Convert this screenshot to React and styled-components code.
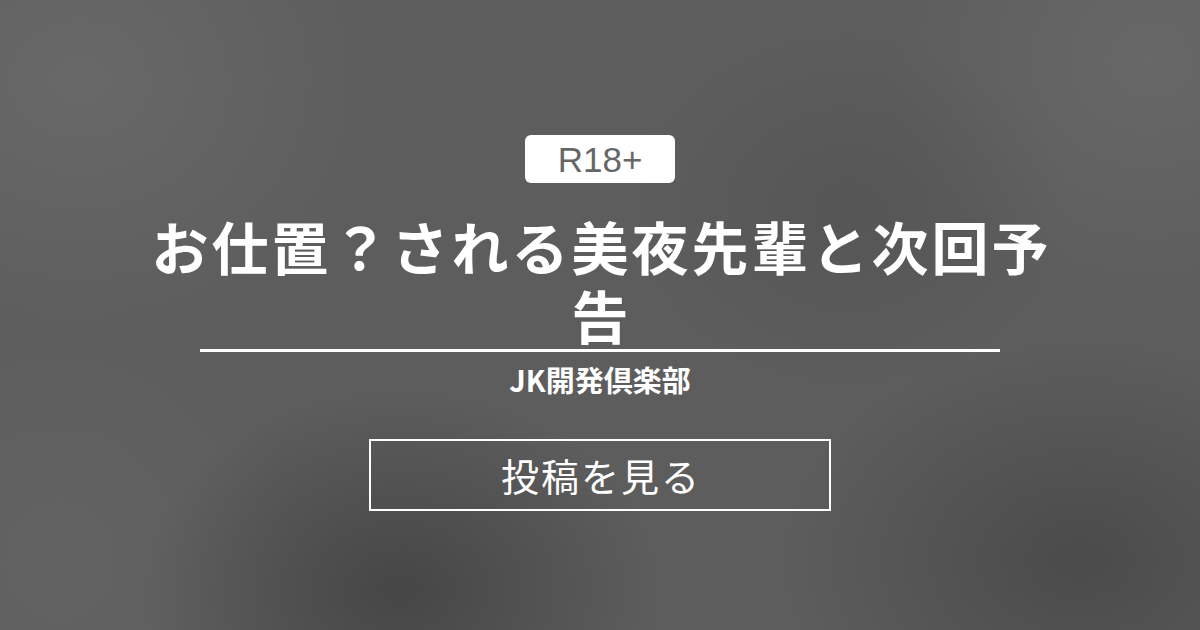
import React from 'react';
import styled, { createGlobalStyle } from 'styled-components';

const GlobalStyle = createGlobalStyle`
  html, body {
    margin: 0;
    padding: 0;
    background: #5c5c5c;
  }
`;

// blurred cover backdrop, built from a few soft patches of grey
const Card = styled.div`
  width: 1200px;
  height: 630px;
  overflow: hidden;
  box-sizing: border-box;
  display: flex;
  flex-direction: column;
  align-items: center;
  padding-top: 135px;
  font-family: 'Noto Sans CJK JP', 'Noto Sans', sans-serif;
  color: #fff;
  background:
    radial-gradient(ellipse 260px 200px at 400px 590px, rgba(60, 60, 60, 0.7), rgba(60, 60, 60, 0) 100%),
    radial-gradient(ellipse 300px 220px at 1080px 560px, rgba(62, 62, 62, 0.6), rgba(62, 62, 62, 0) 100%),
    radial-gradient(ellipse 220px 180px at 850px 210px, rgba(78, 78, 78, 0.5), rgba(78, 78, 78, 0) 100%),
    radial-gradient(ellipse 300px 260px at 80px 80px, rgba(112, 112, 112, 0.6), rgba(112, 112, 112, 0) 100%),
    radial-gradient(ellipse 260px 240px at 1150px 60px, rgba(112, 112, 112, 0.55), rgba(112, 112, 112, 0) 100%),
    radial-gradient(ellipse 240px 260px at 60px 560px, rgba(104, 104, 104, 0.5), rgba(104, 104, 104, 0) 100%),
    #5d5d5d;
`;

const Badge = styled.div`
  width: 150px;
  height: 48px;
  box-sizing: border-box;
  border-radius: 6px;
  background: #fff;
  color: #666;
  display: flex;
  align-items: center;
  justify-content: center;
  font-family: 'Liberation Sans', Arial, sans-serif;
  font-size: 35px;
  line-height: 1;
`;

const Title = styled.h1`
  width: 904px;
  box-sizing: border-box;
  margin: 28px 0 0;
  padding-left: 3px;
  font-size: 57px;
  font-weight: 700;
  letter-spacing: 3px;
  line-height: 69px;
  text-align: center;
`;

const Rule = styled.hr`
  width: 800px;
  height: 3px;
  margin: 0;
  border: none;
  background: #fff;
`;

const Author = styled.div`
  margin-top: 9px;
  font-size: 29px;
  font-weight: 700;
  line-height: 36px;
`;

const ViewButton = styled.a`
  margin-top: 42px;
  width: 462px;
  height: 72px;
  box-sizing: border-box;
  border: 2px solid #fff;
  display: flex;
  align-items: center;
  justify-content: center;
  padding-left: 2px;
  color: #fff;
  text-decoration: none;
  font-size: 38px;
  font-weight: 400;
  letter-spacing: 2px;
  line-height: 1;
`;

export default function App() {
  return (
    <>
      <GlobalStyle />
      <Card>
        <Badge>R18+</Badge>
        <Title>お仕置？される美夜先輩と次回予告</Title>
        <Rule />
        <Author>JK開発倶楽部</Author>
        <ViewButton href="#">投稿を見る</ViewButton>
      </Card>
    </>
  );
}
